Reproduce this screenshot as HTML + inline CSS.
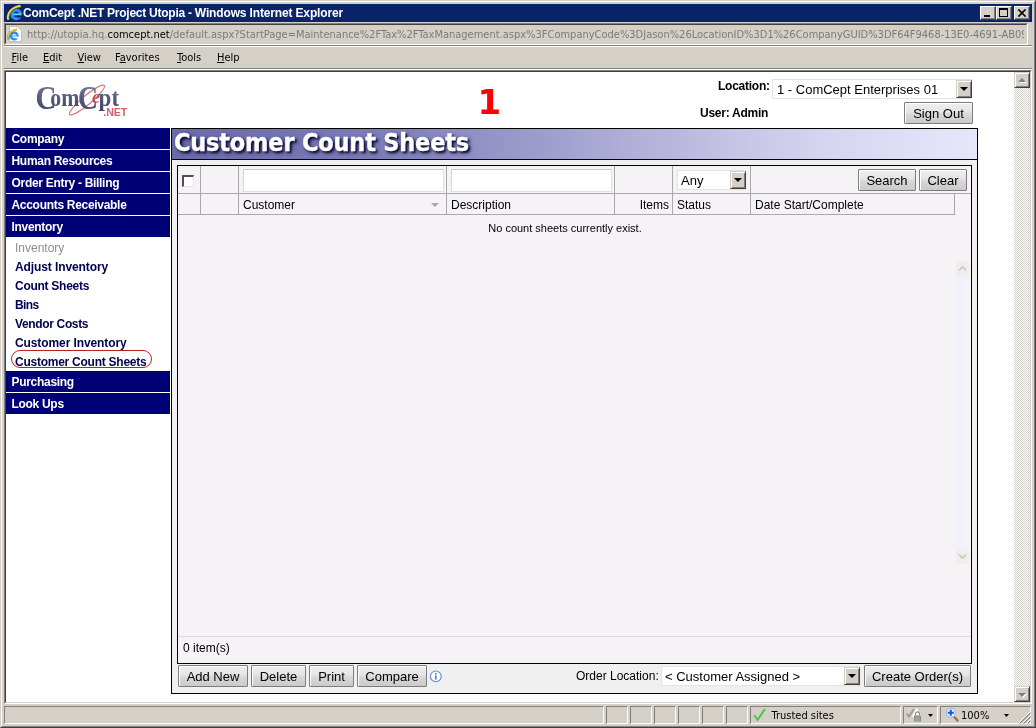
<!DOCTYPE html>
<html>
<head>
<meta charset="utf-8">
<title>ComCept .NET Project Utopia - Windows Internet Explorer</title>
<style>
*{box-sizing:border-box;margin:0;padding:0}
html,body{width:1036px;height:728px;overflow:hidden;background:#d4d0c8}
body{position:relative;font-family:"Liberation Sans",sans-serif;font-size:12px;color:#000}
.a{position:absolute}
.t{position:absolute;white-space:pre;line-height:16px;height:16px}
.tb{font-weight:bold;letter-spacing:-0.25px}
.tah{font-family:"DejaVu Sans Condensed","DejaVu Sans",sans-serif;font-size:11px}
/* window frame */
#frame{left:0;top:0;width:1036px;height:728px;border:1px solid #d4d0c8;border-right-color:#404040;border-bottom-color:#404040}
#frame2{left:1px;top:1px;width:1034px;height:726px;border:1px solid #fff;border-right-color:#808080;border-bottom-color:#808080}
#title{left:4px;top:4px;width:1028px;height:18px;background:#0a246a}
.wb{position:absolute;top:6px;width:16px;height:14px;background:#d4d0c8;border:1px solid #fff;border-right-color:#404040;border-bottom-color:#404040;box-shadow:inset -1px -1px 0 #808080}
#addr{left:4px;top:23px;width:1024px;height:22px;border:1px solid #808080;border-right-color:#fff;border-bottom-color:#fff;background:#d4d0c8}
#addr i{position:absolute;left:0;top:0;right:0;bottom:0;border:1px solid #404040;border-right-color:#d4d0c8;border-bottom-color:#d4d0c8}
.menu .t{font:inherit;line-height:16px}.menu u{text-decoration:underline}
/* client */
#client{left:4px;top:70px;width:1028px;height:634px;background:#fff;border:1px solid #808080;border-right-color:#fff;border-bottom-color:#fff}
#client2{left:5px;top:71px;width:1026px;height:632px;border:1px solid #404040;border-right-color:#d4d0c8;border-bottom-color:#d4d0c8}
#vscroll{left:1014px;top:72px;width:16px;height:630px;background:repeating-conic-gradient(#fff 0 25%,#d4d0c8 0 50%) 0 0/2px 2px}
.sbtn{position:absolute;left:0;width:16px;height:16px;background:#d4d0c8;border:1px solid #d4d0c8;border-right-color:#404040;border-bottom-color:#404040;box-shadow:inset 1px 1px 0 #fff,inset -1px -1px 0 #808080}
/* sidebar */
.row{position:absolute;left:6px;width:164px;height:21px;background:#000076;color:#fff;font-weight:bold;font-size:12px;letter-spacing:-0.3px;line-height:21px;padding-top:1px;padding-left:5.5px;white-space:pre}
.sub{position:absolute;left:15px;font-weight:bold;color:#000050;font-size:12px;letter-spacing:-0.1px;line-height:16px;height:16px;white-space:pre}
/* panel */
#panel{left:171px;top:128px;width:807px;height:566px;border:1px solid #000;background:#f0f0f0}
#head{left:172px;top:129px;width:805px;height:31px;background:linear-gradient(90deg,#6a6aaa 0%,#7c7cb8 25%,#acacd6 55%,#d4d4f0 80%,#e6e6fb 100%);border-bottom:1px solid #000}
#h1{left:174px;top:128px;font-family:"DejaVu Sans Condensed","DejaVu Sans",sans-serif;font-weight:bold;font-size:25px;line-height:30px;color:#fff;white-space:pre;letter-spacing:-0.2px;-webkit-text-stroke:0.35px #fff;text-shadow:2px 2px 2px #14143a,2px 2px 4px rgba(20,20,60,.75)}
#grid{left:177px;top:165px;width:795px;height:499px;border:1px solid #000;background:#f6f3f6}
.vl{position:absolute;width:1px;background:#aaa8aa}
.hl{position:absolute;height:1px;background:#aaa8aa}
.inp{position:absolute;background:#fff;border:1px solid #e2e0e2;border-top-color:#c9c7c9;border-left-color:#d6d4d6}
.btn{position:absolute;height:22px;border:1px solid #7c7c7c;border-radius:1px;background:linear-gradient(#efefef 0%,#e4e4e4 45%,#d8d8d8 55%,#cacaca 100%);font-size:13px;line-height:20px;padding-top:1px;text-align:center;white-space:pre;color:#000;box-shadow:inset 1px 1px 0 #fff}
.sel{position:absolute;height:20px;background:#fff;border:1px solid #e4e2e4;font-size:13px;line-height:18px;padding-top:1px;padding-left:3px;white-space:pre}
.sel b{position:absolute;right:-1px;top:0px;width:16px;height:18px;background:#d4d0c8;border:1px solid #d4d0c8;border-right-color:#404040;border-bottom-color:#404040;box-shadow:inset 1px 1px 0 #fff,inset -1px -1px 0 #808080}
.sel b:after{content:"";position:absolute;left:3px;top:6px;border:4px solid transparent;border-top:4px solid #000;border-bottom:0}
/* status */
.sp{position:absolute;top:706px;height:18px;border:1px solid #808080;border-right-color:#fff;border-bottom-color:#fff}
</style>
</head>
<body>
<div id="root" style="position:absolute;left:0;top:0;width:1036px;height:728px;will-change:transform">
<div class="a" id="frame"></div>
<div class="a" id="frame2"></div>

<!-- title bar -->
<div class="a" id="title"></div>
<svg class="a" style="left:6px;top:4px" width="18" height="18" viewBox="0 0 18 18">
  <circle cx="10.2" cy="10.4" r="4.3" fill="none" stroke="#2f8cf0" stroke-width="3.2"/>
  <rect x="7" y="9.4" width="8" height="2" fill="#6fc8ff"/>
  <rect x="11" y="11.4" width="6" height="2.2" fill="#0a246a"/>
  <path d="M2.6 15.6 C0.5 9.5 6.5 3 14.6 2.2" fill="none" stroke="#4a6a2a" stroke-width="3"/>
  <path d="M2.3 15.7 C0 9.5 6 2.8 14.6 1.9" fill="none" stroke="#f4dc50" stroke-width="1.8"/>
</svg>
<div class="t tb" style="left:23px;top:5px;color:#fff;letter-spacing:-0.15px"><span style="letter-spacing:-0.25px">ComCept .NET Project Utopia - </span>Windows Internet Explorer</div>
<div class="wb" style="left:980px"><span class="a" style="left:3px;top:8px;width:6px;height:2px;background:#000"></span></div>
<div class="wb" style="left:996px"><span class="a" style="left:2px;top:1px;width:9px;height:9px;border:1px solid #000;border-top-width:2px"></span></div>
<div class="wb" style="left:1014px"><svg class="a" style="left:3px;top:2px" width="9" height="8" viewBox="0 0 9 8"><path d="M1 1 L7 7 M7 1 L1 7" stroke="#000" stroke-width="1.7" stroke-linecap="square"/></svg></div>

<!-- address bar -->
<div class="a" id="addr"><i></i></div>
<svg class="a" style="left:7px;top:26px" width="16" height="17" viewBox="0 0 16 17">
  <path d="M2.5 0.5 H10.5 L14.5 4.5 V15.5 H2.5 Z" fill="#fff" stroke="#bcbcbc" stroke-width="1"/>
  <circle cx="7.2" cy="10" r="3.3" fill="none" stroke="#2f8cf0" stroke-width="2.4"/>
  <rect x="5" y="9.2" width="5.5" height="1.6" fill="#6fc8ff"/>
  <rect x="8.4" y="10.8" width="4" height="1.7" fill="#fff"/>
  <path d="M1.2 13.5 C0.5 8.5 4.5 4 10 3.5" fill="none" stroke="#5a7a2a" stroke-width="2.2"/>
  <path d="M1 13.5 C0.2 8.5 4.2 3.8 10 3.3" fill="none" stroke="#f0d448" stroke-width="1.3"/>
</svg>
<div class="a" style="left:27px;top:26px;width:997px;height:18px;overflow:hidden"><div class="t tah" style="left:0;top:1px;color:#7a7a7a">http://utopia.hq.<span style="color:#000">comcept.net</span>/default.aspx?StartPage=Maintenance%2FTax%2FTaxManagement.aspx%3FCompanyCode%3DJason%26LocationID%3D1%26CompanyGUID%3DF64F9468-13E0-4691-AB09</div></div>

<div class="a" style="left:4px;top:45px;width:1028px;height:1px;background:#808080"></div>
<div class="a" style="left:4px;top:46px;width:1028px;height:1px;background:#fff"></div>
<div class="a" style="left:4px;top:68px;width:1028px;height:1px;background:#808080"></div>
<div class="a" style="left:4px;top:69px;width:1028px;height:1px;background:#fff"></div>
<!-- menu -->
<div class="menu tah">
<div class="t" style="left:11.5px;top:50px"><u>F</u>ile</div>
<div class="t" style="left:43px;top:50px"><u>E</u>dit</div>
<div class="t" style="left:77.5px;top:50px"><u>V</u>iew</div>
<div class="t" style="left:115px;top:50px">F<u>a</u>vorites</div>
<div class="t" style="left:177px;top:50px"><u>T</u>ools</div>
<div class="t" style="left:217px;top:50px"><u>H</u>elp</div>
</div>

<!-- client area -->
<div class="a" id="client"></div>
<div class="a" id="client2"></div>
<div class="a" id="vscroll">
  <div class="sbtn" style="top:0"><span class="a" style="left:4px;top:6px;border:4px solid transparent;border-bottom:4px solid #fff;border-top:0"></span><span class="a" style="left:3px;top:5px;border:4px solid transparent;border-bottom:4px solid #808080;border-top:0"></span></div>
  <div class="sbtn" style="bottom:0"><span class="a" style="left:4px;top:7px;border:4px solid transparent;border-top:4px solid #fff;border-bottom:0"></span><span class="a" style="left:3px;top:6px;border:4px solid transparent;border-top:4px solid #808080;border-bottom:0"></span></div>
</div>

<!-- LOGO -->
<svg class="a" id="logo" style="left:30px;top:80px" width="104" height="42" viewBox="30 80 104 42">
  <defs><linearGradient id="lg" x1="0" y1="0" x2="0" y2="1"><stop offset="0" stop-color="#8088a8"/><stop offset="0.5" stop-color="#565c7c"/><stop offset="1" stop-color="#3c4260"/></linearGradient></defs>
  <ellipse cx="87" cy="100" rx="22.5" ry="4.5" transform="rotate(-40 87 100)" fill="none" stroke="#d87c7c" stroke-width="1.3"/>
  <g font-family="Liberation Serif,serif" font-weight="bold" fill="url(#lg)">
    <text x="35.5" y="108.6" font-size="33" textLength="21" lengthAdjust="spacingAndGlyphs">C</text>
    <text x="50.3" y="105.7" font-size="26" textLength="29" lengthAdjust="spacingAndGlyphs">om</text>
    <text x="78" y="108.6" font-size="33" textLength="20" lengthAdjust="spacingAndGlyphs">C</text>
    <text x="98.6" y="105.7" font-size="26" textLength="20.5" lengthAdjust="spacingAndGlyphs">pt</text>
    <text x="92" y="102.8" font-size="18" font-style="italic" fill="#c8485a">e</text>
  </g>
  <text x="103.3" y="115.6" font-family="Liberation Sans,sans-serif" font-weight="bold" font-size="10" fill="#d2606c" textLength="24" lengthAdjust="spacingAndGlyphs">.NET</text>
</svg>

<div class="t" style="left:477.5px;top:84px;height:36px;line-height:36px;font-family:'DejaVu Sans',sans-serif;font-weight:bold;font-size:34px;color:#ff0000">1</div>

<div class="t tb" style="left:718px;top:78px">Location:</div>
<div class="sel" style="left:772px;top:79px;width:200px;padding-left:4px">1 - ComCept Enterprises 01<b></b></div>
<div class="t tb" style="left:700px;top:105px">User: Admin</div>
<div class="btn" style="left:904px;top:102px;width:69px">Sign Out</div>

<!-- sidebar -->
<div class="row" style="top:128px">Company</div>
<div class="row" style="top:150px">Human Resources</div>
<div class="row" style="top:172px">Order Entry - Billing</div>
<div class="row" style="top:194px">Accounts Receivable</div>
<div class="row" style="top:216px">Inventory</div>
<div class="sub" style="top:240px;color:#8c8c8c;font-weight:normal;letter-spacing:0">Inventory</div>
<div class="sub" style="top:259px">Adjust Inventory</div>
<div class="sub" style="top:278px;letter-spacing:-0.27px">Count Sheets</div>
<div class="sub" style="top:297px;letter-spacing:-0.6px">Bins</div>
<div class="sub" style="top:316px;letter-spacing:-0.35px">Vendor Costs</div>
<div class="sub" style="top:335px">Customer Inventory</div>
<div class="sub" style="top:354px;letter-spacing:-0.25px">Customer Count Sheets</div>
<div class="a" style="left:11px;top:350px;width:141px;height:18px;border:1px solid #c02020;border-radius:9px"></div>
<div class="row" style="top:371px">Purchasing</div>
<div class="row" style="top:393px">Look Ups</div>

<!-- main panel -->
<div class="a" id="panel"></div>
<div class="a" id="head"></div>
<div class="a" id="h1">Customer Count Sheets</div>
<div class="a" id="grid"></div>

<!-- grid lines -->
<div class="hl" style="left:178px;top:193px;width:793px"></div>
<div class="hl" style="left:178px;top:214px;width:777px"></div>
<div class="vl" style="left:200px;top:166px;height:48px"></div>
<div class="vl" style="left:238px;top:166px;height:48px"></div>
<div class="vl" style="left:446px;top:166px;height:48px"></div>
<div class="vl" style="left:614px;top:166px;height:48px"></div>
<div class="vl" style="left:672px;top:166px;height:48px"></div>
<div class="vl" style="left:750px;top:166px;height:48px"></div>
<div class="vl" style="left:954px;top:194px;height:21px"></div>
<div class="hl" style="left:178px;top:636px;width:793px;background:#dcdadc"></div>

<!-- filter row -->
<div class="a" style="left:182px;top:175px;width:12px;height:12px;background:#fff;border:1px solid #e6e4e6;border-top:2px solid #505050;border-left:2px solid #505050"></div>
<div class="inp" style="left:243px;top:169px;width:201px;height:23px"></div>
<div class="inp" style="left:451px;top:169px;width:161px;height:23px"></div>
<div class="sel" style="left:677px;top:170px;width:69px">Any<b></b></div>
<div class="btn" style="left:858px;top:169px;width:58px">Search</div>
<div class="btn" style="left:919px;top:169px;width:48px">Clear</div>

<!-- header row -->
<div class="t" style="left:243px;top:197px">Customer</div>
<div class="a" style="left:431px;top:203px;border:4px solid transparent;border-top:4px solid #a8a8a8;border-bottom:0"></div>
<div class="t" style="left:451px;top:197px">Description</div>
<div class="t" style="left:614px;top:197px;width:55px;text-align:right">Items</div>
<div class="t" style="left:677px;top:197px">Status</div>
<div class="t" style="left:755px;top:197px">Date Start/Complete</div>

<div class="t" style="left:178px;top:220px;width:774px;text-align:center;font-size:11px">No count sheets currently exist.</div>

<!-- inner faint scrollbar -->
<div class="a" style="left:952px;top:276px;width:17px;height:273px;background:linear-gradient(90deg,#f6f3f6,#f0f0fb 45%,#f6f3f6)"></div>
<div class="a" style="left:956px;top:261px;width:13px;height:15px;background:#f0eeea;border-radius:2px"><svg class="a" style="left:2px;top:4px" width="9" height="7"><path d="M1 5.5 L4.5 2 L8 5.5" fill="none" stroke="#c9c7c2" stroke-width="1.6"/></svg></div>
<div class="a" style="left:956px;top:549px;width:13px;height:15px;background:#f0eeea;border-radius:2px"><svg class="a" style="left:2px;top:4px" width="9" height="7"><path d="M1 1.5 L4.5 5 L8 1.5" fill="none" stroke="#c9c7c2" stroke-width="1.6"/></svg></div>

<div class="t" style="left:183px;top:640px">0 item(s)</div>

<!-- bottom buttons -->
<div class="btn" style="left:178px;top:665px;width:70px">Add New</div>
<div class="btn" style="left:251px;top:665px;width:55px">Delete</div>
<div class="btn" style="left:309px;top:665px;width:45px">Print</div>
<div class="btn" style="left:357px;top:665px;width:70px">Compare</div>
<svg class="a" style="left:429px;top:669px" width="14" height="14" viewBox="0 0 14 14"><circle cx="6.8" cy="7.4" r="5.4" fill="#fff" stroke="#5a8ad8" stroke-width="1.1"/><rect x="6" y="6.4" width="1.6" height="4.2" fill="#4a78d0"/><rect x="6" y="4" width="1.6" height="1.5" fill="#4a78d0"/></svg>
<div class="t" style="left:576px;top:668px">Order Location:</div>
<div class="sel" style="left:661px;top:666px;width:199px">&lt; Customer Assigned &gt;<b></b></div>
<div class="btn" style="left:864px;top:665px;width:107px">Create Order(s)</div>

<!-- status bar -->
<div class="sp" style="left:4px;width:600px"></div>
<div class="sp" style="left:606px;width:22px"></div>
<div class="sp" style="left:630px;width:22px"></div>
<div class="sp" style="left:654px;width:22px"></div>
<div class="sp" style="left:678px;width:22px"></div>
<div class="sp" style="left:702px;width:22px"></div>
<div class="sp" style="left:726px;width:22px"></div>
<div class="sp" style="left:750px;width:151px"></div>
<div class="sp" style="left:903px;width:35px"></div>
<div class="sp" style="left:940px;width:91px"></div>
<svg class="a" style="left:753px;top:707px" width="14" height="15" viewBox="0 0 14 15"><path d="M1.2 8.2 L4.6 12.8 L12 2" fill="none" stroke="#48c448" stroke-width="1.9"/></svg>
<div class="t tah" style="left:771.5px;top:708px">Trusted sites</div>
<div class="t tah" style="left:961px;top:708px">100%</div>
<!-- status icons -->
<svg class="a" style="left:906px;top:707px" width="17" height="16" viewBox="0 0 17 16">
  <path d="M0.5 6.5 L3 9.5 L8 2" fill="none" stroke="#9a9a9a" stroke-width="1.8"/>
  <path d="M6.5 8 L10.5 1 L15 8 L15 10 L6.5 10 Z" fill="#fff"/>
  <rect x="8" y="8.5" width="7" height="6" fill="#8c8c8c"/>
  <path d="M9.5 8.5 V6.8 A2 2 0 0 1 13.5 6.8 V8.5" fill="none" stroke="#8c8c8c" stroke-width="1.2"/>
  <rect x="9" y="10.5" width="5" height="1" fill="#b4b4b4"/><rect x="9" y="12.5" width="5" height="1" fill="#b4b4b4"/>
</svg>
<svg class="a" style="left:928px;top:714px" width="5" height="3" viewBox="0 0 5 3"><path d="M0 0 H5 L2.5 3 Z" fill="#000"/></svg>
<svg class="a" style="left:945px;top:707px" width="16" height="16" viewBox="0 0 16 16">
  <path d="M8.5 9 L12.5 13.5" stroke="#a0683c" stroke-width="2.2" stroke-linecap="round"/>
  <circle cx="5.8" cy="5.8" r="4.6" fill="#e8f2ff" stroke="#9cc0ee" stroke-width="1.3"/>
  <path d="M5.8 2.8 V8.8 M2.8 5.8 H8.8" stroke="#1c54c4" stroke-width="2"/>
</svg>
<svg class="a" style="left:1004px;top:714px" width="5" height="3" viewBox="0 0 5 3"><path d="M0 0 H5 L2.5 3 Z" fill="#000"/></svg>
<svg class="a" style="left:1018px;top:711px" width="13" height="13" viewBox="0 0 13 13">
  <path d="M12.5 1.5 L1.5 12.5 M12.5 5.5 L5.5 12.5 M12.5 9.5 L9.5 12.5" stroke="#808080" stroke-width="1.4"/>
  <path d="M12.5 0.5 L0.5 12.5 M12.5 4.5 L4.5 12.5 M12.5 8.5 L8.5 12.5" stroke="#fff" stroke-width="1"/>
</svg>
</div>
</body>
</html>
